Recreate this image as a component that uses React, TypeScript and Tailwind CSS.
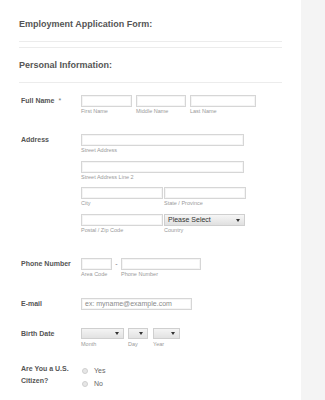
import React from "react";

const Arrow = () => (
  <svg width="4" height="3" viewBox="0 0 4 3" className="block">
    <path d="M0 0 L4 0 L2 3 Z" fill="#333" />
  </svg>
);

const Box = ({ w, children }: { w: string; children?: React.ReactNode }) => (
  <div className={`${w} h-[12px] border border-[#d6d6d6] bg-white box-border shadow-[inset_0_0_0_1px_#f5f5f5]`}>{children}</div>
);

const Sub = ({ children, className = "" }: { children: React.ReactNode; className?: string }) => (
  <div className={`text-[5.5px] leading-[7px] text-[#9a9a9a] whitespace-nowrap ${className}`}>{children}</div>
);

const Label = ({ children }: { children: React.ReactNode }) => (
  <div className="w-[62px] shrink-0 pl-[2px] text-[7px] font-bold text-[#555] leading-[12px]">{children}</div>
);

const Sel = ({ w }: { w: string }) => (
  <div
    className={`${w} h-[11px] border border-[#cfcfcf] box-border flex items-center justify-end pr-[4px] bg-gradient-to-b from-[#f4f4f4] to-[#e2e2e2]`}
  >
    <Arrow />
  </div>
);

export default function App() {
  return (
    <div className="flex w-[325px] h-[400px] overflow-hidden bg-white font-['Liberation_Sans',Arial,sans-serif]">
      <div className="w-[301px] shrink-0 px-[19px]">
        <div className="pt-[18px] text-[9px] leading-[12px] font-bold text-[#555]">Employment Application Form:</div>
        <div className="mt-[11px] h-px bg-[#ececec]" />
        <div className="mt-[5px] h-px bg-[#ececec]" />
        <div className="mt-[11px] text-[9px] leading-[12px] font-bold text-[#555]">Personal Information:</div>
        <div className="mt-[11px] h-px bg-[#ececec]" />

        {/* Full Name */}
        <div className="mt-[12px] flex">
          <Label>
            Full Name <span className="ml-[2px] font-normal text-[#777]">*</span>
          </Label>
          <div className="flex gap-[4px]">
            <div>
              <Box w="w-[51px]" />
              <Sub className="mt-[1px]">First Name</Sub>
            </div>
            <div>
              <Box w="w-[50px]" />
              <Sub className="mt-[1px]">Middle Name</Sub>
            </div>
            <div>
              <Box w="w-[66px]" />
              <Sub className="mt-[1px]">Last Name</Sub>
            </div>
          </div>
        </div>

        {/* Address */}
        <div className="mt-[19px] flex">
          <Label>Address</Label>
          <div>
            <Box w="w-[163px]" />
            <Sub className="mt-[1px]">Street Address</Sub>
            <div className="mt-[7px]">
              <Box w="w-[163px]" />
            </div>
            <Sub className="mt-[1px]">Street Address Line 2</Sub>
            <div className="mt-[6px] flex gap-[1px]">
              <div className="w-[82px]">
                <Box w="w-[82px]" />
                <Sub className="mt-[1px]">City</Sub>
              </div>
              <div className="w-[82px]">
                <Box w="w-[82px]" />
                <Sub className="mt-[1px]">State / Province</Sub>
              </div>
            </div>
            <div className="mt-[7px] flex gap-[1px]">
              <div className="w-[82px]">
                <Box w="w-[82px]" />
                <Sub className="mt-[1px]">Postal / Zip Code</Sub>
              </div>
              <div className="w-[81px]">
                <div className="w-[81px] h-[12px] border border-[#cfcfcf] box-border flex items-center justify-between pl-[3px] pr-[4px] bg-gradient-to-b from-[#f6f6f6] to-[#e0e0e0]">
                  <span className="text-[7px] leading-[10px] text-[#333]">Please Select</span>
                  <Arrow />
                </div>
                <Sub className="mt-[1px]">Country</Sub>
              </div>
            </div>
          </div>
        </div>

        {/* Phone */}
        <div className="mt-[24px] flex">
          <Label>Phone Number</Label>
          <div className="flex">
            <div className="w-[31px]">
              <Box w="w-[31px]" />
              <Sub className="mt-[1px]">Area Code</Sub>
            </div>
            <div className="w-[9px] text-center text-[7px] leading-[12px] text-[#777]">-</div>
            <div className="w-[80px]">
              <Box w="w-[80px]" />
              <Sub className="mt-[1px]">Phone Number</Sub>
            </div>
          </div>
        </div>

        {/* Email */}
        <div className="mt-[20px] flex">
          <Label>E-mail</Label>
          <div className="w-[111px] h-[12px] border border-[#d6d6d6] bg-white box-border pl-[3px] flex items-center shadow-[inset_0_0_0_1px_#f5f5f5]">
            <span className="text-[7px] leading-[10px] text-[#8a8a8a] whitespace-nowrap">ex: myname@example.com</span>
          </div>
        </div>

        {/* Birth Date */}
        <div className="mt-[18px] flex">
          <div className="w-[62px] shrink-0 pl-[2px] text-[7px] font-bold text-[#555] leading-[11px]">Birth Date</div>
          <div className="flex">
            <div>
              <Sel w="w-[43px]" />
              <Sub className="mt-[2px]">Month</Sub>
            </div>
            <div className="ml-[4px]">
              <Sel w="w-[20px]" />
              <Sub className="mt-[2px]">Day</Sub>
            </div>
            <div className="ml-[5px]">
              <Sel w="w-[27px]" />
              <Sub className="mt-[2px]">Year</Sub>
            </div>
          </div>
        </div>

        {/* Citizen */}
        <div className="mt-[15px] flex">
          <Label>
            Are You a U.S.
            <br />
            Citizen?
          </Label>
          <div className="pt-[1px] pl-[1px]">
            <div className="h-[13px] flex items-center gap-[6px]">
              <div className="w-[6px] h-[6px] rounded-full border border-[#cfcfcf] bg-[#e6e6e6] box-border" />
              <span className="text-[7px] text-[#666] leading-[10px]">Yes</span>
            </div>
            <div className="h-[13px] flex items-center gap-[6px]">
              <div className="w-[6px] h-[6px] rounded-full border border-[#cfcfcf] bg-[#e6e6e6] box-border" />
              <span className="text-[7px] text-[#666] leading-[10px]">No</span>
            </div>
          </div>
        </div>
      </div>
      <div className="flex-1 bg-[#f4f4f4]" />
    </div>
  );
}
